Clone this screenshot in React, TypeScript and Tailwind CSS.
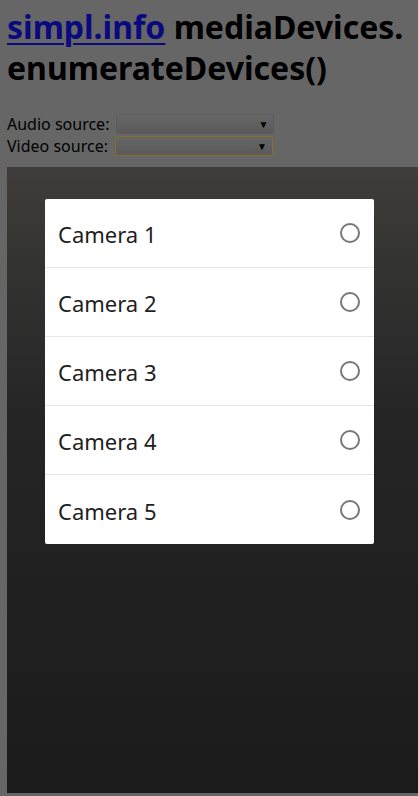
import React from "react";

function Select({ focused }: { focused?: boolean }) {
  return (
    <div
      className={
        "relative h-[20px] w-[158px] rounded-[2px] border bg-linear-to-b from-[#666666] to-[#5a5a5a] " +
        (focused ? "border-[#8a6d2a]" : "border-[#5c5c5c]")
      }
    >
      <span className="absolute right-[5px] top-[2px] text-[10px] leading-[14px] text-black">▼</span>
    </div>
  );
}

function Row({ label, last }: { label: string; last?: boolean }) {
  return (
    <div
      className={
        "flex h-[69px] items-center justify-between pl-[13px] pr-[14px] " +
        (last ? "" : "border-b border-[#e6e6e6]")
      }
    >
      <span className="mt-[2px] text-[22px] leading-none text-[#1e1e1e]">{label}</span>
      <span className="block h-[20px] w-[20px] rounded-full border-[2px] border-[#777777]" />
    </div>
  );
}

export default function App() {
  return (
    <div
      className="h-[796px] w-[418px] overflow-hidden bg-[#666666] pl-[7px]"
      style={{ fontFamily: '"Noto Sans", "Open Sans", sans-serif' }}
    >
      <h1 className="pt-[6px] text-[32px] font-bold leading-[41px] text-black">
        <span className="text-[#0a0a80] underline decoration-[2px] underline-offset-[4px]">simpl.info</span>{" "}
        mediaDevices.
        <br />
        enumerateDevices()
      </h1>
      <div className="mt-[26px] flex flex-col gap-[2px] text-[16px] leading-[20px] text-black">
        <div className="flex items-center gap-[7px]">
          <span>Audio source:</span>
          <Select />
        </div>
        <div className="flex items-center gap-[7px]">
          <span>Video source:</span>
          <Select focused />
        </div>
      </div>
      <div className="mt-[11px] h-[626px] w-[420px] bg-linear-to-b from-[#3e3d3c] via-[#252525] via-40% to-[#1b1b1b] pl-[38px] pt-[32px]">
        <div className="w-[329px] rounded-[2px] bg-white">
          <Row label="Camera 1" />
          <Row label="Camera 2" />
          <Row label="Camera 3" />
          <Row label="Camera 4" />
          <Row label="Camera 5" last />
        </div>
      </div>
    </div>
  );
}
